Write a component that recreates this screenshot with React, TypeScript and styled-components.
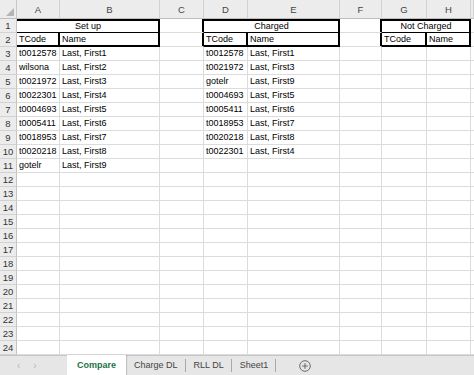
import React from 'react'
import styled, { createGlobalStyle } from 'styled-components'

const GlobalStyle = createGlobalStyle`
    html, body {
        margin: 0;
        padding: 0;
        background: #fff;
        overflow: hidden;
    }
    body {
        font-family: "Liberation Sans", Arial, sans-serif;
    }
`

const setup = [
    ['t0012578', 'Last, First1'],
    ['wilsona', 'Last, First2'],
    ['t0021972', 'Last, First3'],
    ['t0022301', 'Last, First4'],
    ['t0004693', 'Last, First5'],
    ['t0005411', 'Last, First6'],
    ['t0018953', 'Last, First7'],
    ['t0020218', 'Last, First8'],
    ['gotelr', 'Last, First9'],
]

const charged = [
    ['t0012578', 'Last, First1'],
    ['t0021972', 'Last, First3'],
    ['gotelr', 'Last, First9'],
    ['t0004693', 'Last, First5'],
    ['t0005411', 'Last, First6'],
    ['t0018953', 'Last, First7'],
    ['t0020218', 'Last, First8'],
    ['t0022301', 'Last, First4'],
]

const letters = ['A', 'B', 'C', 'D', 'E', 'F', 'G', 'H']
const rows = Array.from({ length: 22 }, (_, i) => i + 3)

const App = () => {
    return (
        <>
            <GlobalStyle />
            <Window>
                <Sheet>
                    <Corner>
                        <svg width="8" height="8" viewBox="0 0 8 8">
                            <polygon points="8,0 8,8 0,8" fill="#b4b4b4" />
                        </svg>
                    </Corner>
                    {letters.map((l) => (
                        <ColHead key={l}>{l}</ColHead>
                    ))}
                    <ColHead />

                    <RowNum>1</RowNum>
                    <Cell $span={2} $center $t $r $b1>Set up</Cell>
                    <Cell $r />
                    <Cell $span={2} $center $t $r $b1>Charged</Cell>
                    <Cell $r />
                    <Cell $span={2} $center $t $r $b1>Not Charged</Cell>
                    <Filler />

                    <RowNum>2</RowNum>
                    <Cell $r $b2>TCode</Cell>
                    <Cell $r $b2>Name</Cell>
                    <Cell $r />
                    <Cell $r $b2>TCode</Cell>
                    <Cell $r $b2>Name</Cell>
                    <Cell $r />
                    <Cell $r $b2>TCode</Cell>
                    <Cell $r $b2>Name</Cell>
                    <Filler />

                    {rows.map((r) => {
                        const s = setup[r - 3]
                        const c = charged[r - 3]
                        return (
                            <React.Fragment key={r}>
                                <RowNum>{r}</RowNum>
                                <Cell>{s?.[0]}</Cell>
                                <Cell>{s?.[1]}</Cell>
                                <Cell />
                                <Cell>{c?.[0]}</Cell>
                                <Cell>{c?.[1]}</Cell>
                                <Cell />
                                <Cell />
                                <Cell />
                                <Filler />
                            </React.Fragment>
                        )
                    })}
                </Sheet>

                <TabBar>
                    <Nav>
                        <Arrow>‹</Arrow>
                        <Arrow>›</Arrow>
                    </Nav>
                    <Tab $active>Compare</Tab>
                    <Tab>Charge DL</Tab>
                    <Tab>RLL DL</Tab>
                    <Tab>Sheet1</Tab>
                    <AddSheet>
                        <svg width="12" height="12" viewBox="0 0 12 12">
                            <circle cx="6" cy="6" r="5.3" fill="none" stroke="#6a6a6a" strokeWidth="1" />
                            <path d="M6 3.2v5.6M3.2 6h5.6" stroke="#6a6a6a" strokeWidth="1.1" />
                        </svg>
                    </AddSheet>
                </TabBar>
            </Window>
        </>
    )
}

export default App

const Window = styled.div`
    width: 474px;
    height: 375px;
    display: flex;
    flex-direction: column;
    overflow: hidden;
`
const Sheet = styled.div`
    display: grid;
    grid-template-columns: 17px 43px 100px 44px 44px 92px 42px 45px 44px 1fr;
    grid-template-rows: 19px repeat(24, 14px);
    font-size: 9px;
    color: #000;
`
const Corner = styled.div`
    background: #ececec;
    border-right: 1px solid #c8c8c8;
    border-bottom: 1px solid #bdbdbd;
    display: flex;
    align-items: flex-end;
    justify-content: flex-end;
    padding: 0 2px 2px 0;
    box-sizing: border-box;
`
const ColHead = styled.div`
    background: #ececec;
    border-right: 1px solid #d2d2d2;
    border-bottom: 1px solid #bdbdbd;
    box-sizing: border-box;
    display: flex;
    align-items: center;
    justify-content: center;
    color: #444;
    font-size: 9.5px;
    padding-top: 1px;
`
const RowNum = styled.div`
    background: #ececec;
    border-right: 1px solid #c4c4c4;
    border-bottom: 1px solid #d2d2d2;
    box-sizing: border-box;
    display: flex;
    align-items: center;
    justify-content: center;
    color: #333;
    font-size: 9.5px;
`

type CellProps = {
    $span?: number
    $center?: boolean
    $t?: boolean
    $r?: boolean
    $b1?: boolean
    $b2?: boolean
}

const Cell = styled.div<CellProps>`
    grid-column: span ${(p) => p.$span || 1};
    box-sizing: border-box;
    border-right: 1px solid ${(p) => (p.$r ? '#000' : '#dcdcdc')};
    border-bottom: 1px solid ${(p) => (p.$b1 || p.$b2 ? '#000' : '#dcdcdc')};
    box-shadow: ${(p) =>
        [
            p.$t ? 'inset 0 2px 0 #000' : '',
            p.$r ? 'inset -1px 0 0 #000' : '',
            p.$b2 ? 'inset 0 -1px 0 #000' : '',
        ]
            .filter(Boolean)
            .join(', ') || 'none'};
    display: flex;
    align-items: center;
    justify-content: ${(p) => (p.$center ? 'center' : 'flex-start')};
    padding: ${(p) => (p.$t ? '2px 2px 0' : '0 2px')};
    white-space: nowrap;
    overflow: visible;
    line-height: 13px;
`
const Filler = styled.div`
    border-bottom: 1px solid #dcdcdc;
`
const TabBar = styled.div`
    flex: 1;
    display: flex;
    align-items: stretch;
    background: #e6e6e6;
    border-top: 1px solid #c6c6c6;
    font-size: 9px;
    color: #444;
`
const Nav = styled.div`
    width: 67px;
    display: flex;
    align-items: center;
    padding-left: 17px;
    gap: 13px;
    box-sizing: border-box;
`
const Arrow = styled.span`
    color: #b8b8b8;
    font-size: 10px;
`
const Tab = styled.div<{ $active?: boolean }>`
    display: flex;
    align-items: center;
    padding: ${(p) => (p.$active ? '0 10px 1px 10px' : '0 8px 1px 8px')};
    background: ${(p) => (p.$active ? '#fff' : 'transparent')};
    color: ${(p) => (p.$active ? '#217346' : '#444')};
    font-weight: ${(p) => (p.$active ? 700 : 400)};
    box-shadow: ${(p) => (p.$active ? '1px 0 1px rgba(0,0,0,0.15)' : 'none')};
    margin-top: ${(p) => (p.$active ? '-1px' : '0')};
    position: relative;

    &::after {
        content: '';
        display: ${(p) => (p.$active ? 'none' : 'block')};
        position: absolute;
        right: 0;
        top: 3px;
        bottom: 3px;
        width: 1px;
        background: #a8a8a8;
    }
`
const AddSheet = styled.div`
    display: flex;
    align-items: center;
    margin-left: 23px;
`
